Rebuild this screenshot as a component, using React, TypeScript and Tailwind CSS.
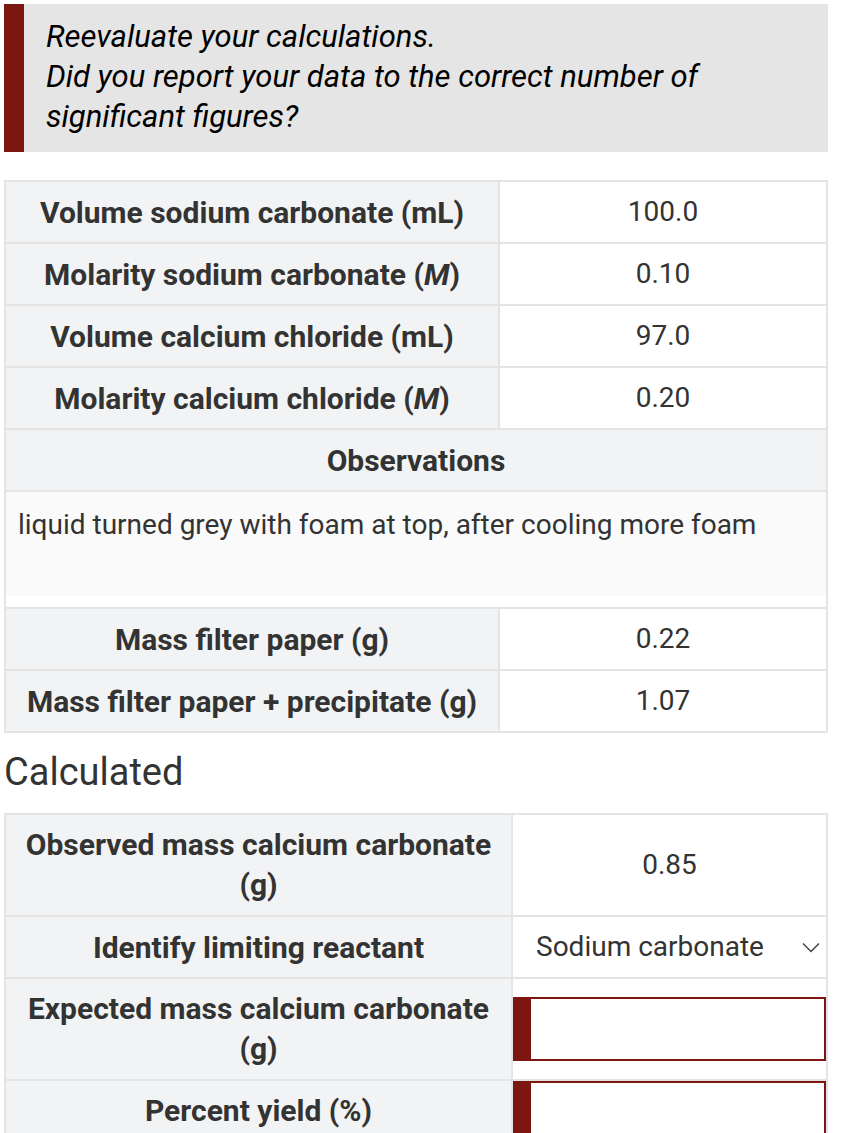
const rows1 = [
  { label: <>Volume sodium carbonate (mL)</>, value: '100.0' },
  { label: <>Molarity sodium carbonate (<i>M</i>)</>, value: '0.10' },
  { label: <>Volume calcium chloride (mL)</>, value: '97.0' },
  { label: <>Molarity calcium chloride (<i>M</i>)</>, value: '0.20' },
];

const rows2 = [
  { label: <>Mass filter paper (g)</>, value: '0.22' },
  { label: <>Mass filter paper + precipitate (g)</>, value: '1.07' },
];

const cell = 'border-2 border-[#e4e4e4]';
const labelCell = `${cell} bg-[#f2f3f4] text-center font-bold text-[30px] text-[#333] px-3 h-[62px]`;
const valueCell = `${cell} bg-white text-center text-[28px] text-[#333] h-[62px]`;

function ErrorInput() {
  return (
    <div className="flex h-[64px] border-2 border-[#7c1610] bg-white -ml-[2px]">
      <div className="w-[18px] bg-[#7c1610]" />
      <div className="flex-1" />
    </div>
  );
}

export default function App() {
  return (
    <div className="bg-white min-h-[1133px] pt-[4px] pl-[4px] pr-[14px]" style={{ fontFamily: 'Roboto, "Liberation Sans", sans-serif' }}>
      <div className="flex bg-[#e5e5e5]">
        <div className="w-[20px] bg-[#7c1610]" />
        <div className="pl-[22px] pt-[13px] pb-[15px] italic text-[31px] leading-[40px] text-black">
          Reevaluate your calculations.
          <br />
          Did you report your data to the correct number of
          <br />
          significant figures?
        </div>
      </div>

      <table className="w-full border-collapse mt-[28px]">
        <colgroup>
          <col className="w-[494px]" />
          <col />
        </colgroup>
        <tbody>
          {rows1.map((r, i) => (
            <tr key={i}>
              <td className={labelCell}>{r.label}</td>
              <td className={valueCell}>{r.value}</td>
            </tr>
          ))}
          <tr>
            <td colSpan={2} className={labelCell}>Observations</td>
          </tr>
          <tr>
            <td colSpan={2} className={`${cell} bg-white p-0 h-[117px] align-top`}>
              <div className="bg-[#fafafa] h-[104px] px-[12px] pt-[16px] text-[28px] text-[#333] leading-[34px]">
                liquid turned grey with foam at top, after cooling more foam
              </div>
            </td>
          </tr>
          {rows2.map((r, i) => (
            <tr key={i}>
              <td className={labelCell}>{r.label}</td>
              <td className={valueCell}>{r.value}</td>
            </tr>
          ))}
        </tbody>
      </table>

      <h2 className="text-[38px] text-[#333] leading-[44px] mt-[17px] mb-[19px]">Calculated</h2>

      <table className="w-full border-collapse">
        <colgroup>
          <col className="w-[507px]" />
          <col />
        </colgroup>
        <tbody>
          <tr>
            <td className={`${labelCell} h-[102px] leading-[40px]`}>Observed mass calcium carbonate (g)</td>
            <td className={valueCell}>0.85</td>
          </tr>
          <tr>
            <td className={labelCell}>Identify limiting reactant</td>
            <td className={`${cell} bg-white h-[62px] px-0`}>
              <div className="flex items-center justify-between pl-[23px] pr-[6px] text-[28px] text-[#333]">
                <span>Sodium carbonate</span>
                <svg width="18" height="11" viewBox="0 0 18 11" fill="none" stroke="#444" strokeWidth="1.5">
                  <polyline points="1,1.5 9,9.5 17,1.5" />
                </svg>
              </div>
            </td>
          </tr>
          <tr>
            <td className={`${labelCell} h-[102px] leading-[40px]`}>Expected mass calcium carbonate (g)</td>
            <td className={`${cell} bg-white h-[102px] p-0 align-middle`}>
              <ErrorInput />
            </td>
          </tr>
          <tr>
            <td className={`${labelCell} h-[102px] leading-[40px] align-top pt-[10px]`}>Percent yield (%)</td>
            <td className={`${cell} bg-white h-[102px] p-0 align-top`}>
              <ErrorInput />
            </td>
          </tr>
        </tbody>
      </table>
    </div>
  );
}
